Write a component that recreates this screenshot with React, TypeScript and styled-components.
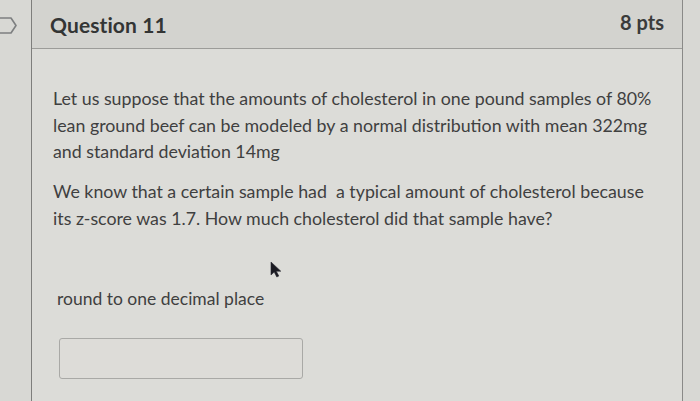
import styled, { createGlobalStyle } from 'styled-components';

const GlobalStyle = createGlobalStyle`
  html, body {
    margin: 0;
    padding: 0;
    background: #d8d8d4;
    overflow: hidden;
  }
  body {
    font-family: Lato, "Open Sans", sans-serif;
  }
`;

const Page = styled.div`
  position: relative;
  display: flex;
  width: 700px;
  height: 401px;
  background: #d8d8d4;
`;

const Rail = styled.div`
  width: 31px;
  flex: none;
  padding-top: 17px;
  box-sizing: border-box;
`;

const Card = styled.div`
  width: 650px;
  flex: none;
  display: flex;
  flex-direction: column;
  border-left: 1.5px solid #7e7e7c;
  border-right: 1.5px solid #8a8a88;
  background: #dcdcd8;
`;

const Header = styled.div`
  height: 48px;
  display: flex;
  align-items: center;
  justify-content: space-between;
  padding: 0 18px 0 18px;
  background: #d3d3cf;
  border-bottom: 1px solid #9c9c99;
  color: #333535;
`;

const Title = styled.h2`
  margin: 0;
  font-size: 21px;
  font-weight: 700;
  letter-spacing: 0.1px;
`;

const Points = styled.span`
  font-size: 20px;
  font-weight: 700;
  color: #3a3b3b;
  padding-bottom: 4px;
`;

const Body = styled.div`
  padding: 36px 10px 0 21px;
  color: #3f4040;
  font-size: 17.8px;
  line-height: 26.5px;
  white-space: nowrap;
`;

const Para = styled.p<{ $gap?: number; $indent?: number; $size?: number }>`
  margin: 0 0 ${(p) => p.$gap ?? 13.5}px ${(p) => p.$indent ?? 0}px;
  font-size: ${(p) => p.$size ?? 17.8}px;
`;

const AnswerBox = styled.div`
  width: 242px;
  height: 39px;
  margin-left: 6px;
  border: 1.5px solid #a9a9a6;
  border-radius: 3px;
  background: #dddcd8;
`;

const Cursor = styled.svg`
  position: absolute;
  left: 270px;
  top: 261px;
`;

const FlagIcon = () => (
  <svg width="20" height="18" viewBox="0 0 20 18">
    <path
      d="M-4 1 H11 L16 8.5 L11 16 H-4"
      fill="none"
      stroke="#7d7f80"
      strokeWidth="1.6"
      strokeLinejoin="round"
    />
  </svg>
);

export default function App() {
  return (
    <>
      <GlobalStyle />
      <Page>
        <Rail>
          <FlagIcon />
        </Rail>
        <Card>
          <Header>
            <Title>Question 11</Title>
            <Points>8 pts</Points>
          </Header>
          <Body>
            <Para>
              Let us suppose that the amounts of cholesterol in one pound samples of 80%
              <br />
              lean ground beef can be modeled by a normal distribution with mean 322mg
              <br />
              and standard deviation 14mg
            </Para>
            <Para $gap={55}>
              We know that a certain sample had&nbsp; a typical amount of cholesterol because
              <br />
              its z-score was 1.7. How much cholesterol did that sample have?
            </Para>
            <Para $gap={25} $indent={4} $size={17.5}>round to one decimal place</Para>
            <AnswerBox />
          </Body>
        </Card>
        <Cursor width="13" height="17" viewBox="0 0 13 17">
          <path d="M1 1 L1 14 L4.2 11 L6.8 16 L8.8 15 L6.3 10.2 L10.8 10.2 Z" fill="#1b1b22" stroke="#2a2a33" strokeWidth="0.6" />
        </Cursor>
      </Page>
    </>
  );
}
